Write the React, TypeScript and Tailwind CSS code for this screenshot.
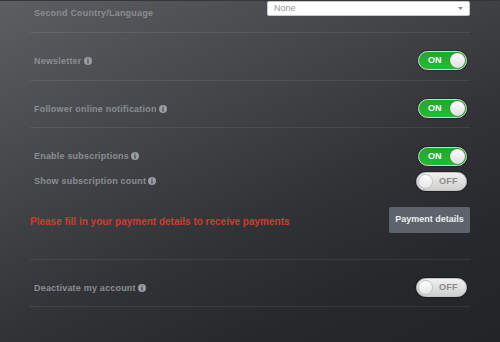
import React from "react";

function InfoIcon() {
  return (
    <svg width="8" height="8" viewBox="0 0 8 8" className="ml-[2px] -mt-[2px] inline-block">
      <circle cx="4" cy="4" r="4" fill="#9a9da1" />
      <rect x="3.4" y="1.3" width="1.2" height="1.1" fill="#45474b" />
      <rect x="3.4" y="3" width="1.2" height="3.6" fill="#45474b" />
    </svg>
  );
}

function Label({ text, info = true }: { text: string; info?: boolean }) {
  return (
    <div className="flex items-center pl-1 text-[9px] font-bold leading-[11px] tracking-[0.2px] text-[#8b8e92]">
      <span>{text}</span>
      {info && <InfoIcon />}
    </div>
  );
}

function Toggle({ on }: { on: boolean }) {
  if (on) {
    return (
      <div className="flex h-[19px] w-[49px] items-center justify-between rounded-full border border-[#d4d6d4] bg-[linear-gradient(#1ea82a,#27b934)] pl-[9px] pr-[1px] shadow-[0_0_0_1px_rgba(0,0,0,0.25)]">
        <span className="text-[9px] font-bold leading-none text-white">ON</span>
        <div className="h-[15px] w-[15px] rounded-full bg-[linear-gradient(#ffffff,#dedede)] shadow-[0_0_1px_rgba(0,0,0,0.5)]" />
      </div>
    );
  }
  return (
    <div className="flex h-[19px] w-[51px] items-center rounded-full border border-[#c4c4c4] bg-[linear-gradient(#f0f0f0,#cfcfcf)] pl-[1px] shadow-[0_0_0_1px_rgba(0,0,0,0.25)]">
      <div className="h-[15px] w-[15px] rounded-full border border-[#c2c2c2] bg-[linear-gradient(#ffffff,#e6e6e6)]" />
      <span className="ml-[6px] text-[9px] font-bold leading-none tracking-[0.3px] text-[#8a8a8a]">OFF</span>
    </div>
  );
}

function Divider() {
  return <div className="h-px w-full bg-[rgba(255,255,255,0.08)]" />;
}

function ToggleRow({ label, on, tall }: { label: string; on: boolean; tall?: boolean }) {
  return (
    <div className={`flex items-start justify-between pr-[3px] pt-[18px] ${tall ? "h-[47px]" : "h-[46px]"}`}>
      <div className="pt-[5px]">
        <Label text={label} />
      </div>
      <Toggle on={on} />
    </div>
  );
}

export default function App() {
  return (
    <div
      className="h-[342px] w-[500px] overflow-hidden border-t border-[#34363a] bg-[linear-gradient(155deg,#5c5e61_0%,#46484b_30%,#303236_60%,#26282c_80%,#222428_100%)] pl-[30px] pr-[30px]"
      style={{ fontFamily: '"Liberation Sans", Arial, sans-serif' }}
    >
      <div className="flex h-[31px] items-start justify-between">
        <div className="pt-[7px]">
          <Label text="Second Country/Language" info={false} />
        </div>
        <div className="flex h-[15px] w-[203px] items-center justify-between rounded-[2px] border border-[#c8c8c8] bg-white pl-[6px] pr-[6px]">
          <span className="text-[9px] leading-none text-[#9a9a9a]">None</span>
          <svg width="5" height="3" viewBox="0 0 5 3">
            <path d="M0 0 L5 0 L2.5 3 Z" fill="#8a8a8a" />
          </svg>
        </div>
      </div>
      <Divider />
      <ToggleRow label="Newsletter" on tall />
      <Divider />
      <ToggleRow label="Follower online notification" on />
      <Divider />
      <div className="flex h-[131px] flex-col">
        <div className="flex items-center justify-between pr-[3px] pt-[19px]">
          <Label text="Enable subscriptions" />
          <Toggle on />
        </div>
        <div className="mt-[6px] flex items-center justify-between pr-[3px]">
          <Label text="Show subscription count" />
          <Toggle on={false} />
        </div>
        <div className="mt-[16px] flex items-center justify-between">
          <span className="pt-[3px] text-[10px] font-bold text-[#d03b2f]">
            Please fill in your payment details to receive payments
          </span>
          <button className="h-[26px] w-[81px] rounded-[2px] bg-[#5e626d] text-[9px] font-bold text-[#eeeeee]">
            Payment details
          </button>
        </div>
      </div>
      <Divider />
      <ToggleRow label="Deactivate my account" on={false} />
      <Divider />
    </div>
  );
}
